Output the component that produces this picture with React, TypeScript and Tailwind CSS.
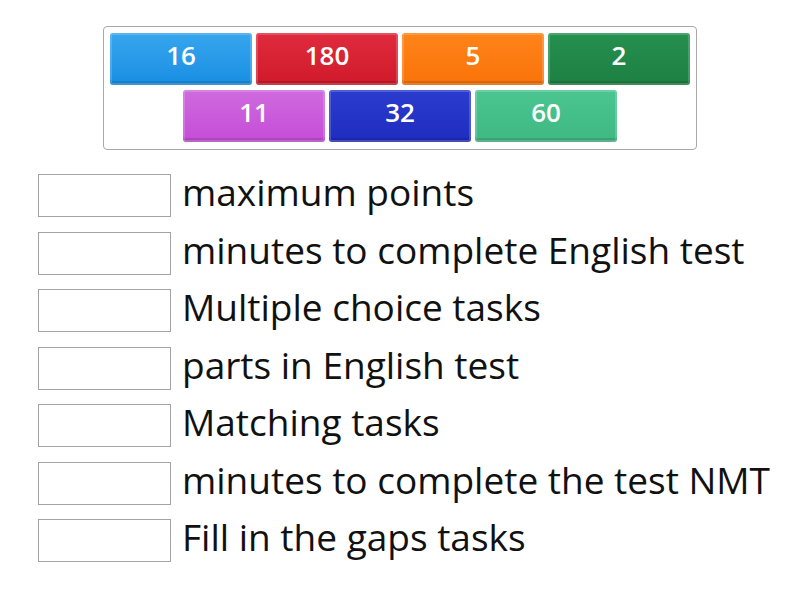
import React from 'react';

const tiles = [
  [
    { label: '16', bg: 'bg-gradient-to-b from-[#36a6ee] to-[#178ee2]' },
    { label: '180', bg: 'bg-gradient-to-b from-[#e02a3d] to-[#d01a2c]' },
    { label: '5', bg: 'bg-gradient-to-b from-[#ff8419] to-[#f97308]' },
    { label: '2', bg: 'bg-gradient-to-b from-[#25904f] to-[#1d8043]' },
  ],
  [
    { label: '11', bg: 'bg-gradient-to-b from-[#cf6ade] to-[#c54cd8]' },
    { label: '32', bg: 'bg-gradient-to-b from-[#2a3ccf] to-[#1f2cbf]' },
    { label: '60', bg: 'bg-gradient-to-b from-[#4bc690] to-[#3fb882]' },
  ],
];

const prompts = [
  'maximum points',
  'minutes to complete English test',
  'Multiple choice tasks',
  'parts in English test',
  'Matching tasks',
  'minutes to complete the test NMT',
  'Fill in the gaps tasks',
];

const App = () => {
  return (
    <div className="w-[800px] h-[600px] bg-white font-['Open_Sans',sans-serif] pt-[26px]">
      <div className="mx-auto w-[594px] h-[124px] border border-[#a8a8a8] rounded-[4px] px-[6px] pt-[6px] flex flex-col items-center gap-[5px]">
        {tiles.map((row, i) => (
          <div key={i} className="flex gap-[4px]">
            {row.map((t) => (
              <div
                key={t.label}
                className={`w-[142px] h-[52px] rounded-[3px] ${t.bg} shadow-[inset_0_0_0_2px_rgba(255,255,255,0.18),inset_0_-4px_0_rgba(0,0,0,0.12)] flex items-center justify-center text-white font-semibold text-[26px] leading-none pb-[8px]`}
              >
                {t.label}
              </div>
            ))}
          </div>
        ))}
      </div>
      <div className="mt-[24px] pl-[38px] flex flex-col gap-[14.5px]">
        {prompts.map((p) => (
          <div key={p} className="flex items-center h-[43px]">
            <div className="w-[133px] h-[43px] border border-[#a3a3a3] bg-white shrink-0" />
            <span className="ml-[11px] text-[37px] leading-none text-[#111] pb-[8px]">{p}</span>
          </div>
        ))}
      </div>
    </div>
  );
};

export default App;
